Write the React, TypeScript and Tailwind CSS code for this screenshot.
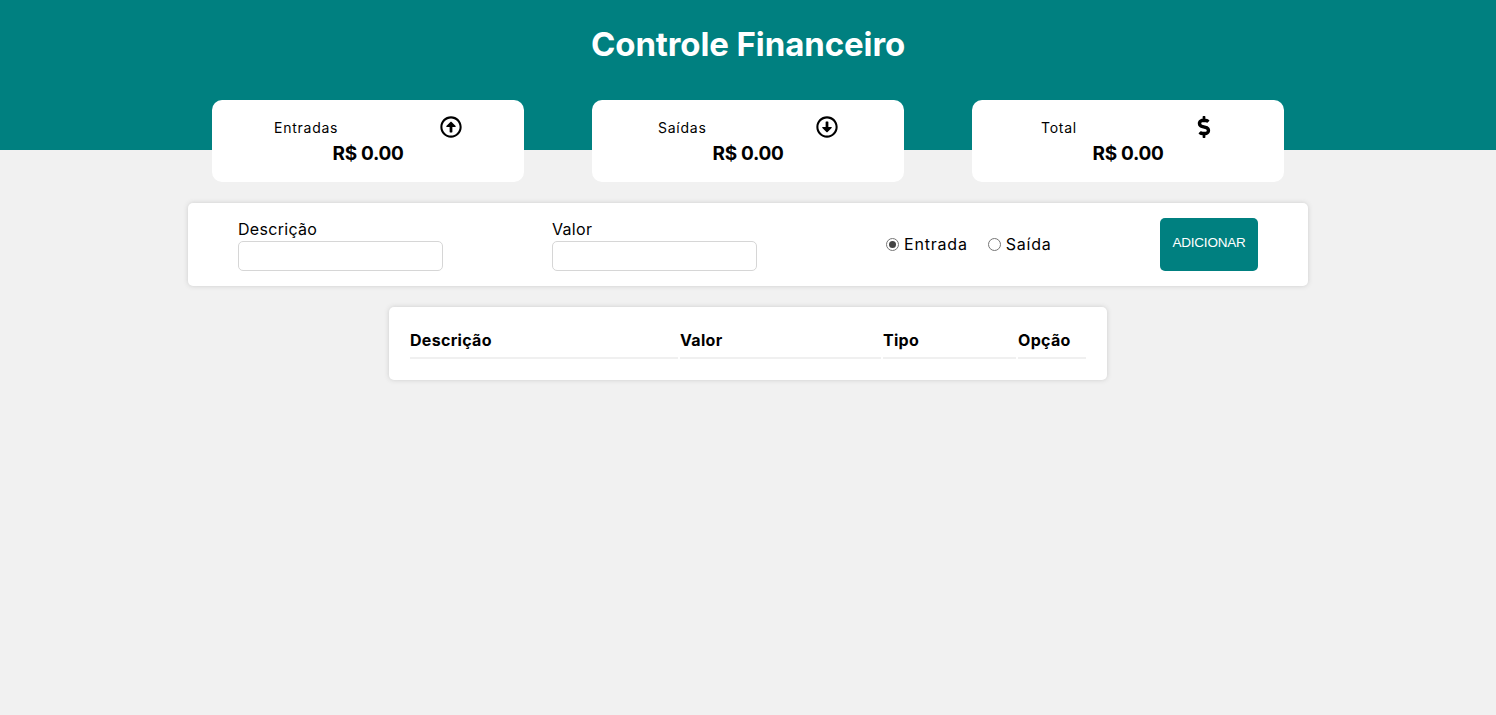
import React from "react";
import { FaRegArrowAltCircleUp, FaRegArrowAltCircleDown, FaDollarSign } from "react-icons/fa";

const font = "font-['Inter','Noto_Sans',sans-serif]";

function Card({ title, icon, titleW }: { title: string; icon: React.ReactNode; titleW: string }) {
  return (
    <div className="w-[312px] h-[82px] rounded-[10px] bg-white pt-[16px] px-[11px] flex flex-col items-stretch">
      <div className="flex justify-around items-center h-[22px]">
        <span className={`text-[14px] leading-[24px] pt-[1px] text-black tracking-[0.75px] whitespace-nowrap ${titleW}`}>{title}</span>
        {icon}
      </div>
      <div className="text-center text-[19px] leading-[28px] font-bold text-black mt-[2px] tracking-[-0.3px]">R$ 0.00</div>
    </div>
  );
}

function Field({ label }: { label: string }) {
  return (
    <div className="w-[205px] flex flex-col">
      <label className="text-[16px] leading-[24px] text-black tracking-[0.3px]">{label}</label>
      <input className="w-[205px] h-[30px] rounded-[5px] border border-[#d6d6d6] bg-white outline-none" />
    </div>
  );
}

function Radio({ label, checked }: { label: string; checked?: boolean }) {
  return (
    <label className="flex items-center">
      <span className="w-[13px] h-[13px] rounded-full border border-[#767676] flex items-center justify-center bg-white">
        {checked && <span className="w-[7px] h-[7px] rounded-full bg-[#444]" />}
      </span>
      <span className="ml-[5px] text-[16px] leading-[24px] text-black tracking-[0.8px]">{label}</span>
    </label>
  );
}

export default function App() {
  const th = "text-left font-bold text-[16px] leading-[24px] pb-[5px] border-b-2 border-[#f0f0f0] text-black p-0 tracking-[0.3px]";
  return (
    <div className={`min-h-[715px] bg-[#f1f1f1] ${font}`}>
      <header className="h-[150px] bg-[#008080] pt-[22px] text-center">
        <h1 className="text-[33px] leading-[44px] font-bold text-white tracking-[-0.1px]">Controle Financeiro</h1>
      </header>

      <section className="-mt-[50px] flex justify-center gap-[68px]">
        <Card title="Entradas" titleW="w-[64px]" icon={<FaRegArrowAltCircleUp className="w-[22px] h-[22px] text-black" />} />
        <Card title="Saídas" titleW="w-[48px]" icon={<FaRegArrowAltCircleDown className="w-[22px] h-[22px] text-black" />} />
        <Card title="Total" titleW="w-[36px]" icon={<FaDollarSign className="w-[22px] h-[22px] text-black" />} />
      </section>

      <section className="mx-auto mt-[21px] w-[1120px] h-[83px] rounded-[5px] bg-white shadow-[0_0_5px_#ccc] pl-[50px] flex items-center">
        <div className="-mt-[2px]"><Field label="Descrição" /></div>
        <div className="ml-[109px] -mt-[2px]"><Field label="Valor" /></div>
        <div className="ml-[129px] w-[165px] flex gap-[20px] -mt-[1px]">
          <Radio label="Entrada" checked />
          <Radio label="Saída" />
        </div>
        <button className="ml-[109px] w-[98px] h-[53px] rounded-[5px] bg-[#008080] text-white text-[13.5px] tracking-[-0.2px] pb-[3px] font-['Liberation_Sans',sans-serif]">ADICIONAR</button>
      </section>

      <section className="mx-auto mt-[21px] w-[718px] h-[73px] rounded-[5px] bg-white shadow-[0_0_5px_#ccc] px-[19px] pt-[19px]">
        <table className="w-[678px] table-fixed border-separate border-spacing-[2px]">
          <thead>
            <tr>
              <th className={`${th} w-[268px]`}>Descrição</th>
              <th className={`${th} w-[201px]`}>Valor</th>
              <th className={`${th} w-[133px]`}>Tipo</th>
              <th className={`${th} w-[68px]`}>Opção</th>
            </tr>
          </thead>
        </table>
      </section>
    </div>
  );
}
